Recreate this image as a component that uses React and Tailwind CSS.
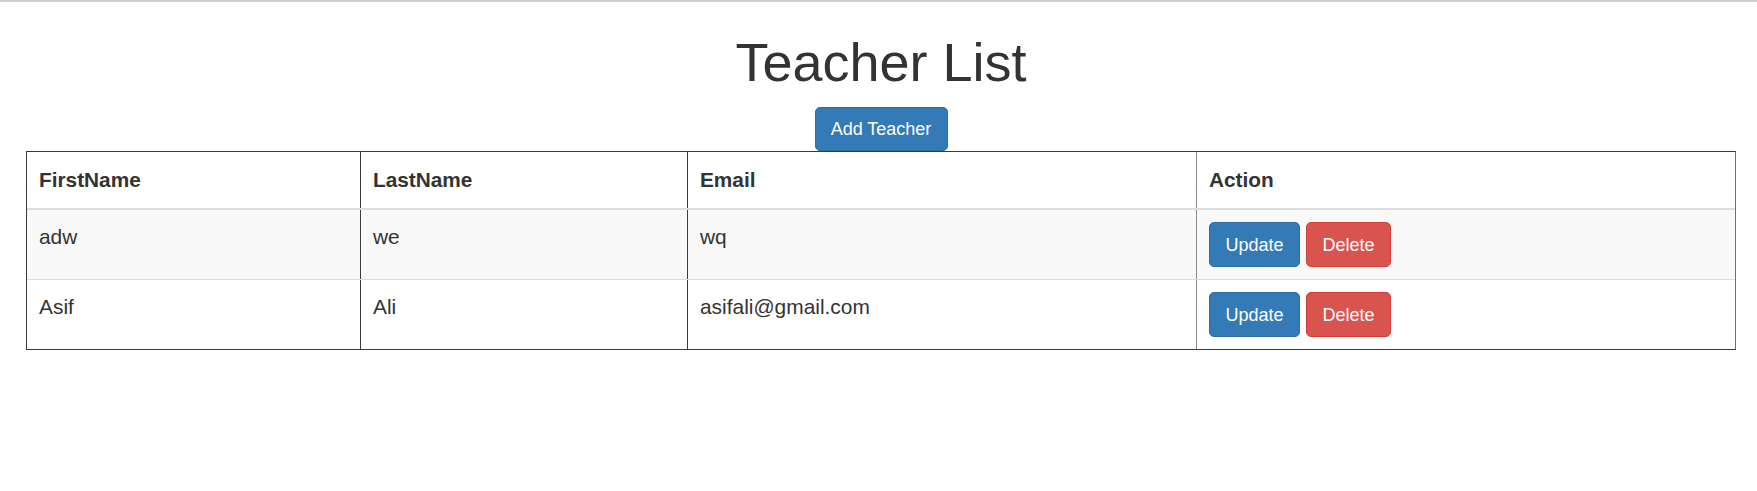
import React from "react";

const rows = [
  { first: "adw", last: "we", email: "wq", striped: true },
  { first: "Asif", last: "Ali", email: "asifali@gmail.com", striped: false },
];

function ActionButtons() {
  return (
    <div className="flex gap-[6px]">
      <button className="w-[91px] h-[45px] rounded-[5px] bg-[#337ab7] border border-[#2e6da4] text-white text-[18px] leading-none">
        Update
      </button>
      <button className="w-[85px] h-[45px] rounded-[5px] bg-[#d9534f] border border-[#d43f3a] text-white text-[18px] leading-none">
        Delete
      </button>
    </div>
  );
}

export default function App() {
  return (
    <div
      className="min-h-[491px] bg-white border-t-2 border-[#d0d0d0] text-[#333]"
      style={{ fontFamily: '"Liberation Sans", Arial, sans-serif' }}
    >
      <div className="pl-[26px] pr-[21px]">
        <h1 className="mt-[31px] text-center text-[54px] leading-[58px] font-normal text-[#333]">
          Teacher List
        </h1>
        <div className="flex justify-center mt-[16px]">
          <button className="w-[133px] h-[44px] rounded-[5px] bg-[#337ab7] border border-[#2e6da4] text-white text-[18px] leading-none">
            Add Teacher
          </button>
        </div>
        <div className="border border-[#3a3a3a] border-r-[#707070]">
          <div className="grid grid-cols-[334px_327px_509px_1fr] h-[58px] border-b-2 border-[#dddddd] text-[20.8px] font-bold">
            <div className="flex items-center pl-[12px] border-r border-[#3a3a3a]">FirstName</div>
            <div className="flex items-center pl-[12px] border-r border-[#3a3a3a]">LastName</div>
            <div className="flex items-center pl-[12px] border-r border-[#8a8a8a]">Email</div>
            <div className="flex items-center pl-[12px]">Action</div>
          </div>
          {rows.map((r, i) => (
            <div
              key={i}
              className={
                "grid grid-cols-[334px_327px_509px_1fr] text-[20.9px] leading-[29px] " +
                (r.striped ? "bg-[#f9f9f9] h-[70px] border-b border-[#dddddd]" : "bg-white h-[69px]")
              }
            >
              <div className="pl-[12px] pt-[12px] border-r border-[#3a3a3a]">{r.first}</div>
              <div className="pl-[12px] pt-[12px] border-r border-[#3a3a3a]">{r.last}</div>
              <div className="pl-[12px] pt-[12px] border-r border-[#8a8a8a]">{r.email}</div>
              <div className="pl-[12px] pt-[12px]">
                <ActionButtons />
              </div>
            </div>
          ))}
        </div>
      </div>
    </div>
  );
}
